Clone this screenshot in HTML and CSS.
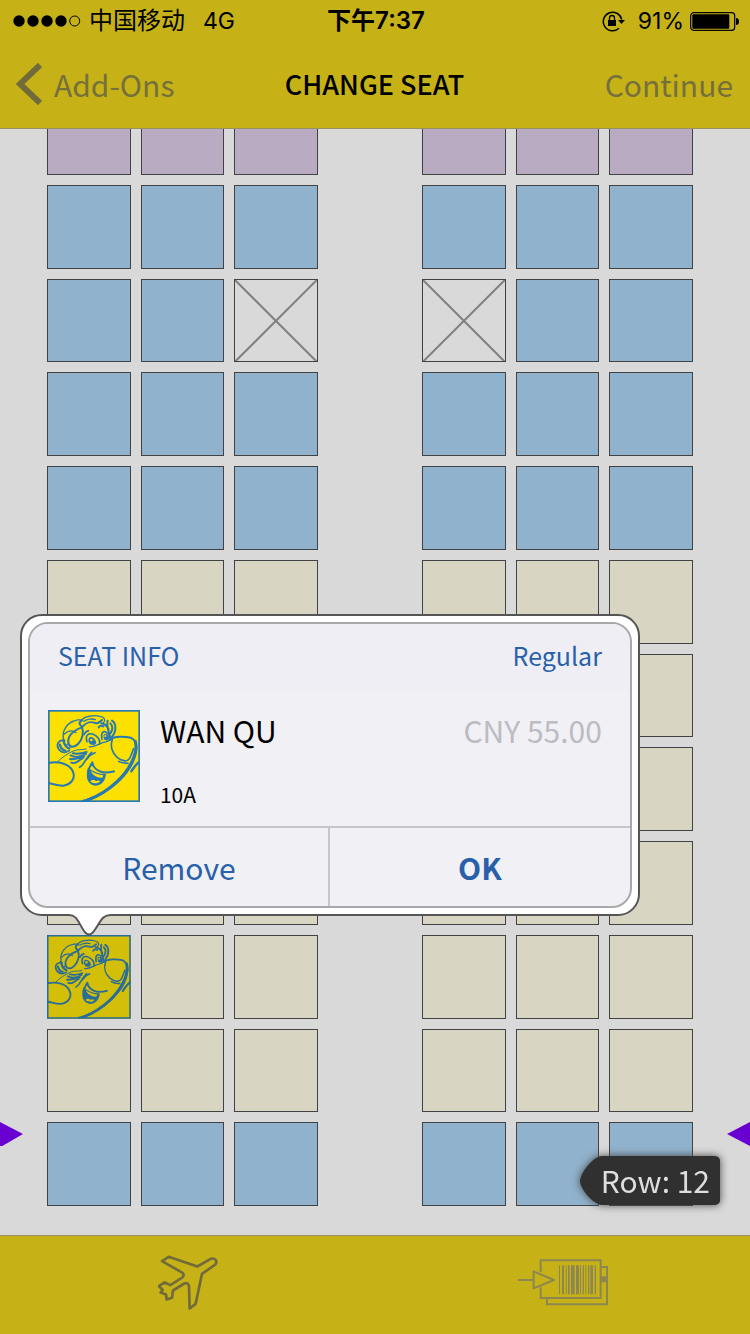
FILE: index.html
```html
<!DOCTYPE html>
<html lang="en">
<head>
<meta charset="utf-8">
<meta name="viewport" content="width=device-width, initial-scale=1">
<title>Change Seat</title>
<link rel="stylesheet" href="styles.css">
</head>
<body>
<svg class="defs" aria-hidden="true">
  <symbol id="face" viewBox="24 24 276 276">
    <g fill="none" stroke="currentColor" stroke-linecap="round" stroke-linejoin="round">
      <path stroke-width="4" d="M70 108C66 88 80 64 102 57C110 54 120 53 127 53C132 44 160 38 180 43C194 45 198 55 190 63"/>
      <path stroke-width="6" d="M127 54C112 62 120 72 128 74C136 64 150 58 162 62C174 68 180 60 186 54"/>
      <path stroke-width="6" d="M126 76C132 90 128 112 114 126C104 136 91 138 86 126C80 106 96 86 126 76"/>
      <path stroke-width="4" d="M72 97C84 86 98 84 108 92M132 58C142 50 158 50 166 53M86 124C80 132 76 130 72 124"/>
      <path stroke-width="5" d="M74 116C56 112 48 126 55 140C64 153 77 153 88 146"/>
      <path stroke-width="7" d="M60 128C62 138 68 144 76 146M70 112C72 128 78 136 88 140"/>
      <path stroke-width="6" d="M184 64C196 66 202 74 206 82M203 56C198 72 208 90 209 105M216 56C229 64 230 88 216 104M211 64C219 72 218 84 211 94"/>
      <path stroke-width="6" d="M132 97C135 91 140 88 145 86M176 76C180 70 186 70 190 73"/>
      <path stroke-width="5" d="M141 119C135 99 145 93 158 96C174 102 181 115 179 125M186 112C182 92 190 84 200 92C210 98 214 108 211 114"/>
      <path stroke-width="4" d="M148 134C160 137 170 130 183 124C194 119 204 121 214 111"/>
      <path stroke-width="6" d="M210 112C225 102 254 103 272 107C287 114 292 130 288 151C281 191 249 230 213 256C187 276 160 290 127 297"/>
      <path stroke-width="9" d="M286 118C295 153 270 202 231 239C209 260 178 281 144 294"/>
      <path stroke-width="7" d="M274 208C282 196 286 188 298 179"/>
      <path stroke-width="5" d="M217 113C210 132 216 153 232 167C248 179 264 181 271 165C276 154 278 146 281 140M236 178C245 184 254 183 264 184"/>
      <path stroke-width="3" d="M51 181C66 166 84 153 105 145C117 142 130 144 139 141"/>
      <path stroke-width="6" d="M92 160C103 166 121 166 138 156M90 171C105 174 120 166 132 164M94 182C110 188 115 174 128 169M99 154C112 157 126 155 140 150"/>
      <path stroke-width="5" d="M119 196C132 189 132 176 143 169C148 162 156 155 165 152M132 182C139 171 145 160 155 151"/>
      <path stroke-width="6" d="M26 183C55 177 88 185 98 207C109 231 91 248 70 251C52 252 38 245 26 244"/>
      <path stroke-width="6" d="M157 181C158 193 169 205 185 210C199 214 210 211 222 208M156 183C151 193 145 199 144 211"/>
    </g>
    <g fill="currentColor">
      <path d="M144 197C162 211 181 217 198 216C196 238 184 251 165 251C141 246 136 226 144 197Z"/>
      <path d="M146 110C150 102 160 105 165 113C175 125 162 133 151 127C145 121 144 115 146 110Z"/>
      <path d="M190 100C195 92 205 97 208 106C210 116 197 118 192 112Z"/>
    </g>
    <path class="face-teeth" d="M152 207C162 213 176 219 190 220L187 227C172 229 157 219 152 207Z"/>
    <path class="face-teeth" d="M151 239C157 232 164 234 168 238C173 234 177 235 180 238C175 245 165 246 151 239Z"/>
    <circle class="face-teeth" cx="154" cy="114" r="4"/><circle class="face-teeth" cx="196" cy="102" r="3"/>
    <rect x="26" y="26" width="272" height="272" fill="none" stroke="currentColor" stroke-width="6"/>
  </symbol>
</svg>

<header class="top">
  <div class="status">
    <div class="status-left">
      <svg class="signal" width="68" height="12" viewBox="0 0 68 12" aria-hidden="true"><circle cx="6" cy="6" r="5.700"/><circle cx="20" cy="6" r="5.700"/><circle cx="34" cy="6" r="5.700"/><circle cx="48" cy="6" r="5.700"/><circle cx="61.700" cy="6" r="5" fill="none" stroke="#000"/></svg>
      <span class="carrier">中国移动</span>
      <span class="network">4G</span>
    </div>
    <div class="status-time">下午7:37</div>
    <div class="status-right">
      <svg width="24" height="22" viewBox="0 0 24 22" aria-hidden="true"><path d="M17 18.300A9.300 9.300 0 1 1 19.700 9.500" fill="none" stroke="#000" stroke-width="1.500"/><path d="M16 10h7l-3.500 4z"/><rect x="6" y="10" width="8" height="6"/><path d="M7.500 10V8a2.500 2.500 0 0 1 5 0v2" fill="none" stroke="#000" stroke-width="1.300"/></svg>
      <span class="percent">91%</span>
      <svg width="49" height="19" viewBox="0 0 49 19" aria-hidden="true"><rect x=".7" y=".7" width="44" height="17.600" rx="3" fill="none" stroke="#000" stroke-width="1.200"/><rect x="2.300" y="2.300" width="37" height="14.400" rx="1"/><path d="M46 6q3 0 3 3.500t-3 3.500z"/></svg>
    </div>
  </div>
  <nav class="nav">
    <button class="nav-button" type="button"><svg width="26" height="42" viewBox="0 0 26 42" aria-hidden="true"><path d="M24 2L4 21l20 19" fill="none" stroke="#716b3b" stroke-width="6"/></svg>Add-Ons</button>
    <h1 class="title">CHANGE SEAT</h1>
    <button class="nav-button nav-next" type="button">Continue</button>
  </nav>
</header>

<main class="map">
  <div class="seats" id="seats"></div>
  <output class="row-tag"><svg class="row-tag-shape" viewBox="0 0 140 49" preserveAspectRatio="none" aria-hidden="true"><path d="M22 0H134Q140 0 140 6V43Q140 49 134 49H22C12 48 0 32 0 25S12 1 22 0Z" fill="#303030"/></svg><span class="row-tag-text">Row: 12</span></output>
</main>

<footer class="tabs">
  <button class="tab" type="button" aria-label="Flight">
    <svg width="60" height="55" viewBox="54 76 180 164" aria-hidden="true"><path d="M66 94L86 81L172 110L212 87C227 83 233 94 226 104L186 132L167 222L149 236L147 169Q145 157 133 161L99 182L96 204L80 209L78 194L62 188L68 180L56 169L74 158L91 166L127 143Q134 136 128 129Z" fill="none" stroke="#716b3b" stroke-width="8" stroke-linejoin="round"/></svg>
  </button>
  <button class="tab" type="button" aria-label="Boarding pass">
    <svg width="90" height="47" viewBox="54 62 270 141" aria-hidden="true"><g fill="none" stroke="#8d8650" stroke-width="6"><path d="M122 101V66H302V179H122V147M141 179V198H321V86H304M54 125H101"/><path d="M101 99V150L162 125Z" stroke-linejoin="round"/></g><g fill="#8d8650"><path d="M302 114h19v18h-19zM177 81h3v87h-3zM186 81h6v87h-6zM197 81h3v87h-3zM204 81h5v87h-5zM213 81h11v87h-11zM228 81h9v87h-9zM240 81h3v87h-3zM248 81h4v87h-4zM256 81h3v87h-3zM264 81h4v87h-4zM271 81h8v87h-8zM284 81h4v87h-4z"/></g></svg>
  </button>
</footer>

<template id="popover">
  <section class="popover" role="dialog" aria-label="Seat info">
    <svg class="popover-tail" width="42" height="24" viewBox="0 0 42 24" aria-hidden="true"><path d="M0 0V2C8 2 9 9 15 18Q20 25 25 18C32 9 32 2 42 2V0Z" fill="#fff"/><path d="M0 2C8 2 9 9 15 18Q20 25 25 18C32 9 32 2 42 2" fill="none" stroke="#555" stroke-width="2"/></svg>
    <div class="card">
      <div class="card-head"><span>SEAT INFO</span><span>Regular</span></div>
      <div class="card-body">
        <svg class="avatar" aria-hidden="true"><use href="#face"/></svg>
        <div class="person"><div class="person-line"><span>WAN QU</span><span class="price">CNY 55.00</span></div><div class="seat-no">10A</div></div>
      </div>
      <div class="card-actions"><button class="action" type="button">Remove</button><button class="action action-ok" type="button">OK</button></div>
    </div>
  </section>
</template>
<script src="seats.js"></script>
</body>
</html>
```
FILE: seats.js
```js
const rows = ["ppp.ppp", "bbb.bbb", "bbx.xbb", "bbb.bbb", "bbb.bbb", "ccc.ccc", "ccc.ccc", "ccc.ccc", "ccc.ccc", "scc.ccc", "ccc.ccc", "bbb.bbb"];
const kinds = { p: "premium", b: "blue", c: "regular", x: "taken", s: "selected" };
const letters = "ABC.DEF";
const grid = document.getElementById("seats");

rows.forEach((row, r) => {
  [...row].forEach((kind, c) => {
    const cell = document.createElement("div");
    cell.className = "cell";
    if (kind !== ".") {
      const seat = document.createElement("button");
      seat.type = "button";
      seat.className = "seat seat-" + kinds[kind];
      seat.setAttribute("aria-label", "Seat " + (r + 1) + letters[c]);
      if (kind === "x") {
        seat.disabled = true;
        seat.innerHTML = '<svg class="cross" viewBox="0 0 84 84"><path d="M0 0L84 84M84 0L0 84"/></svg>';
      }
      if (kind === "s") seat.innerHTML = '<svg class="seat-face"><use href="#face"/></svg>';
      cell.append(seat);
      if (kind === "s") cell.append(document.getElementById("popover").content.cloneNode(true));
    }
    grid.append(cell);
  });
});
for (const side of ["left", "right"]) {
  const exit = document.createElement("span");
  exit.className = "exit exit-" + side;
  grid.append(exit);
}
```
FILE: styles.css
```css
* { box-sizing: border-box; }
body {
  margin: 0;
  height: 100vh;
  display: flex;
  flex-direction: column;
  background: #d9d9d9;
  color: #000;
  font-family: "Noto Sans CJK SC", "Noto Sans", sans-serif;
}
button { margin: 0; padding: 0; border: 0; background: none; font: inherit; color: inherit; }
svg { display: block; flex: none; }
.defs { position: absolute; width: 0; height: 0; }

.top { background: #c6b217; border-bottom: 1px solid #989163; }
.status {
  height: 40px;
  padding: 0 11px 0 13px;
  display: grid;
  grid-template-columns: 1fr auto 1fr;
  align-items: center;
  font: 24px/42px Inter, "Noto Sans CJK SC", sans-serif;
}
.status-left { display: flex; align-items: center; gap: 8px; }
.carrier { margin-right: 10px; }
.network, .percent { font-size: 23px; }
.status-time { font-weight: 600; }
.status-right { display: flex; align-items: center; justify-content: flex-end; }
.percent { margin: 0 6px 0 12px; }
.nav {
  height: 88px;
  padding: 0 17px 0 16px;
  display: grid;
  grid-template-columns: 1fr auto 1fr;
  align-items: center;
}
.nav-button {
  display: flex;
  align-items: center;
  gap: 12px;
  justify-self: start;
  color: #756f3c;
  font-size: 30px;
  line-height: 44px;
}
.nav-next { justify-self: end; }
.title { margin: 0; font-size: 27px; line-height: 40px; font-weight: 500; }

.map {
  position: relative;
  flex: 1;
  min-height: 0;
  overflow: hidden;
  display: flex;
  flex-direction: column;
  justify-content: flex-end;
  padding-bottom: 29px;
}
.seats {
  position: relative;
  display: grid;
  grid-template-columns: repeat(7, 1fr);
  gap: 10px;
  padding: 0 calc(6.25vw + 10px) 0 6.25vw;
}
.cell { position: relative; aspect-ratio: 1; }
.seat { display: block; width: 100%; height: 100%; border: 1px solid #404244; }
.seat-premium { background: #b9abc2; }
.seat-blue { background: #91b2cc; }
.seat-regular { background: #d8d5c3; }
.seat-selected { border: 0; background: #d4bf08; color: #286c98; --teeth: #d4bf08; }
.seat-face { width: 100%; height: 100%; }
.face-teeth { fill: var(--teeth); }
.cross { width: 100%; height: 100%; }
.cross path { stroke: #808080; stroke-width: 2; }
.exit {
  position: absolute;
  bottom: 60px;
  width: 23px;
  height: 24px;
  background: #6800d1;
}
.exit-left { left: 0; clip-path: polygon(0 0, 100% 50%, 10% 100%, 0 100%); }
.exit-right { right: 0; clip-path: polygon(100% 0, 0 50%, 100% 100%); }

.row-tag {
  position: absolute;
  right: 30px;
  bottom: 30px;
  padding: 0 10px 0 21px;
  color: #dedede;
  font-size: 30px;
  line-height: 49px;
  filter: drop-shadow(0 0 4px #444);
}
.row-tag-shape { position: absolute; inset: 0; width: 100%; height: 100%; }
.row-tag-text { position: relative; }

.popover {
  position: absolute;
  z-index: 2;
  left: -27px;
  bottom: calc(100% + 19px);
  width: calc(100vw - 130px);
  padding: 6px;
  border: 2px solid #555;
  border-radius: 22px;
  background: #fff;
}
.popover-tail { position: absolute; left: 47px; top: calc(100% - 1px); }
.card { border: 2px solid #a9a9ac; border-radius: 20px; background: #f1f0f5; overflow: hidden; }
.card-head {
  display: flex;
  justify-content: space-between;
  padding: 0 28px 4px;
  background: #efeef4;
  color: #2860aa;
  font-size: 25px;
  line-height: 62px;
}
.card-body { display: flex; gap: 20px; padding: 20px 28px 24px 18px; }
.avatar { width: 92px; height: 92px; background: #fce001; color: #2779b3; --teeth: #fce001; }
.person { flex: 1; display: flex; flex-direction: column; justify-content: space-between; }
.person-line { display: flex; justify-content: space-between; font-size: 30px; line-height: 40px; }
.price { color: #bcbbc0; }
.seat-no { font-size: 21px; line-height: 15px; }
.card-actions { display: grid; grid-template-columns: 1fr 1fr; border-top: 2px solid #c5c5ca; }
.action { color: #2860aa; font-size: 30px; line-height: 78px; height: 78px; }
.action:first-child { border-right: 2px solid #c5c5ca; }
.action-ok { font-weight: 700; }

.tabs {
  display: grid;
  grid-template-columns: 1fr 1fr;
  height: 99px;
  padding-bottom: 5px;
  border-top: 1px solid #989163;
  background: #c6b217;
}
.tab { display: flex; align-items: center; justify-content: center; }
```
